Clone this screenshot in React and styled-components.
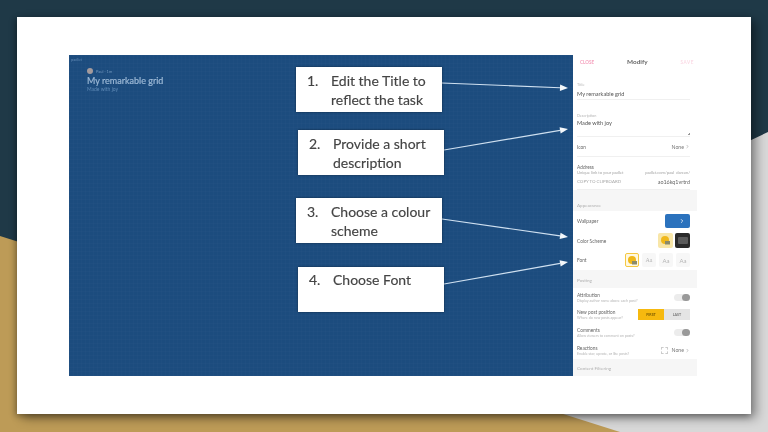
import React from "react";
import styled, { createGlobalStyle } from "styled-components";
import { ChevronRight } from "lucide-react";

const Global = createGlobalStyle`
  html, body { margin: 0; padding: 0; width: 768px; height: 432px; overflow: hidden; background: #1f3a4a; }
  * { box-sizing: border-box; }
`;

const Slide = styled.div`
  position: relative; width: 768px; height: 432px; padding: 17px; overflow: hidden;
  background: #1f3947; font-family: "Lato", "Liberation Sans", sans-serif;
`;
const GreyShape = styled.div`
  position: absolute; inset: 0; background: #d8d8d8;
  clip-path: polygon(768px 132px, 768px 432px, 0 432px, 0 493px);
`;
const GoldShape = styled.div`
  position: absolute; inset: 0; background: #bd9b57;
  clip-path: polygon(0 236px, 620px 432px, 0 432px);
`;
const Card = styled.div`
  position: relative; width: 734px; height: 397px; padding: 38px 54px 38px 52px;
  background: #fff; box-shadow: 5px 4px 10px rgba(0,0,0,.4), -2px 2px 6px rgba(0,0,0,.3);
`;
const Shot = styled.div`
  position: relative; display: flex; width: 628px; height: 321px;
`;
const Canvas = styled.div`
  width: 504px; padding: 2px 2px; color: #a9c3dd; filter: blur(.55px);
  background-color: #1c4c7e;
  background-image:
    linear-gradient(rgba(255,255,255,.012) 1px, transparent 1px),
    linear-gradient(90deg, rgba(255,255,255,.012) 1px, transparent 1px);
  background-size: 4px 4px;
`;
const Tiny = styled.div`font-size: 4px; line-height: 6px; color: #5f88b3;`;
const Header = styled.div`padding: 4px 0 0 16px;`;
const Author = styled.div`display: flex; align-items: center; gap: 3px; font-size: 4px; color: #6f94ba; height: 8px;`;
const Avatar = styled.span`width: 6px; height: 6px; border-radius: 50%; background: #a59b9c;`;
const BoardTitle = styled.div`font-size: 9px; line-height: 11px; font-weight: 400; color: #9db9d6; -webkit-text-stroke: .2px #9db9d6;`;
const BoardSub = styled.div`font-size: 5px; line-height: 6px; color: #5f8ab6;`;

const Side = styled.div`
  width: 124px; background: #fff; overflow: hidden; color: #555; filter: blur(.45px); font-size: 4.6px;
`;
const TopBar = styled.div`
  display: flex; justify-content: space-between; align-items: center; height: 13px; padding: 0 3px 0 7px;
`;
const TopLink = styled.span`
  font-size: 4.6px; font-weight: 700; color: ${p => p.$light ? "#fbdbe6" : "#f5a3bf"};
  letter-spacing: ${p => p.$light ? ".6px" : "0"};
`;
const TopTitle = styled.span`font-size: 6.4px; font-weight: 700; color: #666;`;
const Field = styled.div`
  margin: 0 7px 0 4px; height: ${p => p.$h}px; padding-top: ${p => p.$pt}px;
  border-bottom: 1px solid #f0f0f0; position: relative;
`;
const FieldLabel = styled.div`font-size: 3.8px; line-height: 5px; color: #b5b5b5;`;
const FieldValue = styled.div`font-size: 5.6px; line-height: 8px; color: #555; margin-top: ${p => p.$gap}px;`;
const Resize = styled.span`
  position: absolute; right: 0; bottom: 1px; width: 3px; height: 3px;
  background: linear-gradient(135deg, transparent 50%, #999 50%);
`;
const Row = styled.div`
  display: flex; justify-content: space-between; align-items: center;
  margin: 0 7px 0 4px; height: ${p => p.$h}px;
  ${p => p.$line && "border-bottom: 1px solid #f0f0f0;"}
`;
const RowTitle = styled.div`font-size: 4.8px; line-height: 6px; color: #666;`;
const RowHint = styled.div`font-size: 3.6px; line-height: 5px; color: #b5b5b5;`;
const Section = styled.div`
  height: ${p => p.$h}px; background: #f6f6f6; padding: ${p => p.$pt}px 0 0 4px;
  font-size: 4.6px; line-height: 6px; color: #b0b0b0;
`;
const Split = styled.div`
  display: flex; justify-content: space-between; font-size: ${p => p.$size}px; line-height: 6px; color: #a5a5a5;
  margin-top: ${p => p.$gap || 0}px;
`;
const Code = styled.span`font-size: 5.4px; color: #666;`;
const Value = styled.span`display: flex; align-items: center; gap: 1px; font-size: 5.2px; color: #777;`;
const WallpaperBtn = styled.div`
  display: flex; align-items: center; justify-content: flex-end; padding-right: 5px;
  width: 25px; height: 14px; border-radius: 2px; background: #2b72bd; color: #fff;
`;
const Swatches = styled.div`display: flex; gap: 2px; align-items: center;`;
const Swatch = styled.div`
  display: flex; align-items: center; justify-content: center;
  width: 15px; height: 15px; border-radius: 2px;
  background: ${p => p.$dark ? "#2a2a2a" : "#f8e6a8"};
`;
const Mini = styled.div`width: 10px; height: 7px; background: #5a5a5a; border-radius: 1px;`;
const Fonts = styled.div`display: flex; gap: 3px; align-items: center;`;
const FontTile = styled.div`
  display: flex; align-items: center; justify-content: center;
  width: 14px; height: 14px; border-radius: 2px; font-size: 6px;
  color: #b5b5b5; background: ${p => p.$on ? "#fff8e0" : "#f7f7f7"};
  border: ${p => p.$on ? "1px solid #f5c842" : "none"};
  font-family: ${p => p.$serif ? '"Liberation Serif", serif' : '"Lato", sans-serif'};
`;
const Toggle = styled.div`
  position: relative; width: 16px; height: 7px; border-radius: 4px; background: #ececec;
  &::after { content: ""; position: absolute; right: 0; top: 0; width: 8px; height: 7px; border-radius: 4px; background: #999; }
`;
const Segments = styled.div`display: flex; width: 52px; height: 11px;`;
const Segment = styled.div`
  flex: 1; display: flex; align-items: center; justify-content: center; font-size: 3.6px; font-weight: 700;
  color: ${p => p.$on ? "#7a5a00" : "#777"}; background: ${p => p.$on ? "#f6b90f" : "#e4e4e4"};
`;
const Dashed = styled.span`width: 7px; height: 7px; border: 1px dashed #ccc; margin-right: 3px;`;

const Note = styled.div`
  position: absolute; left: ${p => p.$x}px; top: ${p => p.$y}px; width: 146px; height: 45px;
  display: grid; grid-template-columns: 24px 1fr; align-content: start;
  padding: ${p => p.$pt}px 0 0 11px;
  background: #fff; color: #444; font-size: 14px; line-height: 19px;
  -webkit-text-stroke: .15px #444;
  box-shadow: 0 0 2px rgba(0,0,0,.5); filter: blur(.3px);
`;
const Arrows = styled.svg`position: absolute; left: 0; top: 0; pointer-events: none; filter: blur(.2px);`;

const notes = [
  { x: 227, y: 12, n: "1.", lines: ["Edit the Title to", "reflect the task"], pt: 4 },
  { x: 229, y: 75, n: "2.", lines: ["Provide a short", "description"], pt: 4 },
  { x: 227, y: 143, n: "3.", lines: ["Choose a colour", "scheme"], pt: 4 },
  { x: 229, y: 212, n: "4.", lines: ["Choose Font"], pt: 3 },
];
const arrows = [
  [373, 28, 499, 33],
  [375, 95, 499, 74],
  [373, 164, 499, 182],
  [375, 229, 499, 207],
];

const Emoji = () => (
  <svg width="11" height="11" viewBox="0 0 11 11">
    <circle cx="5" cy="5" r="4" fill="#f0b81a" />
    <rect x="5" y="6" width="5" height="3.5" fill="#8a8a6a" />
  </svg>
);

function Sidebar() {
  return (
    <Side>
      <TopBar>
        <TopLink>CLOSE</TopLink>
        <TopTitle>Modify</TopTitle>
        <TopLink $light>SAVE</TopLink>
      </TopBar>
      <Field $h={32} $pt={14}>
        <FieldLabel>Title</FieldLabel>
        <FieldValue $gap={3}>My remarkable grid</FieldValue>
      </Field>
      <Field $h={37} $pt={13}>
        <FieldLabel>Description</FieldLabel>
        <FieldValue $gap={1}>Made with joy</FieldValue>
        <Resize />
      </Field>
      <Row $h={20} $line>
        <RowTitle>Icon</RowTitle>
        <Value>None <ChevronRight size={5} /></Value>
      </Row>
      <Field $h={33} $pt={7}>
        <RowTitle>Address</RowTitle>
        <Split $size={4.1}><span>Unique link to your padlet</span><span>padlet.com/paul_darcan/</span></Split>
        <Split $size={4.4} $gap={3}><span>COPY TO CLIPBOARD</span><Code>ao16kq1vrtrd</Code></Split>
      </Field>
      <Section $h={21} $pt={12}>Appearance</Section>
      <Row $h={20}>
        <RowTitle>Wallpaper</RowTitle>
        <WallpaperBtn><ChevronRight size={6} strokeWidth={3} /></WallpaperBtn>
      </Row>
      <Row $h={19}>
        <RowTitle>Color Scheme</RowTitle>
        <Swatches>
          <Swatch><Emoji /></Swatch>
          <Swatch $dark><Mini /></Swatch>
        </Swatches>
      </Row>
      <Row $h={20}>
        <RowTitle>Font</RowTitle>
        <Fonts>
          <FontTile $on><Emoji /></FontTile>
          <FontTile $serif>Aa</FontTile>
          <FontTile>Aa</FontTile>
          <FontTile>Aa</FontTile>
        </Fonts>
      </Row>
      <Section $h={18} $pt={7}>Posting</Section>
      <Row $h={18}>
        <div>
          <RowTitle>Attribution</RowTitle>
          <RowHint>Display author name above each post?</RowHint>
        </div>
        <Toggle />
      </Row>
      <Row $h={17}>
        <div>
          <RowTitle>New post position</RowTitle>
          <RowHint>Where do new posts appear?</RowHint>
        </div>
        <Segments>
          <Segment $on>FIRST</Segment>
          <Segment>LAST</Segment>
        </Segments>
      </Row>
      <Row $h={18}>
        <div>
          <RowTitle>Comments</RowTitle>
          <RowHint>Allow viewers to comment on posts?</RowHint>
        </div>
        <Toggle />
      </Row>
      <Row $h={18}>
        <div>
          <RowTitle>Reactions</RowTitle>
          <RowHint>Enable star, upvote, or like posts?</RowHint>
        </div>
        <Value><Dashed />None <ChevronRight size={5} /></Value>
      </Row>
      <Section $h={20} $pt={6}>Content Filtering</Section>
    </Side>
  );
}

export default function App() {
  return (
    <>
      <Global />
      <Slide>
        <GreyShape />
        <GoldShape />
        <Card>
          <Shot>
            <Canvas>
              <Tiny>padlet</Tiny>
              <Header>
                <Author><Avatar /> Paul · 1m</Author>
                <BoardTitle>My remarkable grid</BoardTitle>
                <BoardSub>Made with joy</BoardSub>
              </Header>
            </Canvas>
            <Sidebar />
            <Arrows width="628" height="321" viewBox="0 0 628 321">
              {arrows.map(([x1, y1, x2, y2]) => {
                const a = Math.atan2(y2 - y1, x2 - x1);
                const l = 8, w = 3.2;
                const bx = x2 - l * Math.cos(a), by = y2 - l * Math.sin(a);
                const px = -Math.sin(a) * w, py = Math.cos(a) * w;
                return (
                  <g key={x1 + "-" + y1}>
                    <line x1={x1} y1={y1} x2={bx} y2={by} stroke="#cfe0f0" strokeWidth="1.1" />
                    <polygon points={`${x2},${y2} ${bx + px},${by + py} ${bx - px},${by - py}`} fill="#f4f8fb" />
                  </g>
                );
              })}
            </Arrows>
            {notes.map(n => (
              <Note key={n.n} $x={n.x} $y={n.y} $pt={n.pt}>
                <span>{n.n}</span>
                <div>{n.lines.map(l => <div key={l}>{l}</div>)}</div>
              </Note>
            ))}
          </Shot>
        </Card>
      </Slide>
    </>
  );
}
